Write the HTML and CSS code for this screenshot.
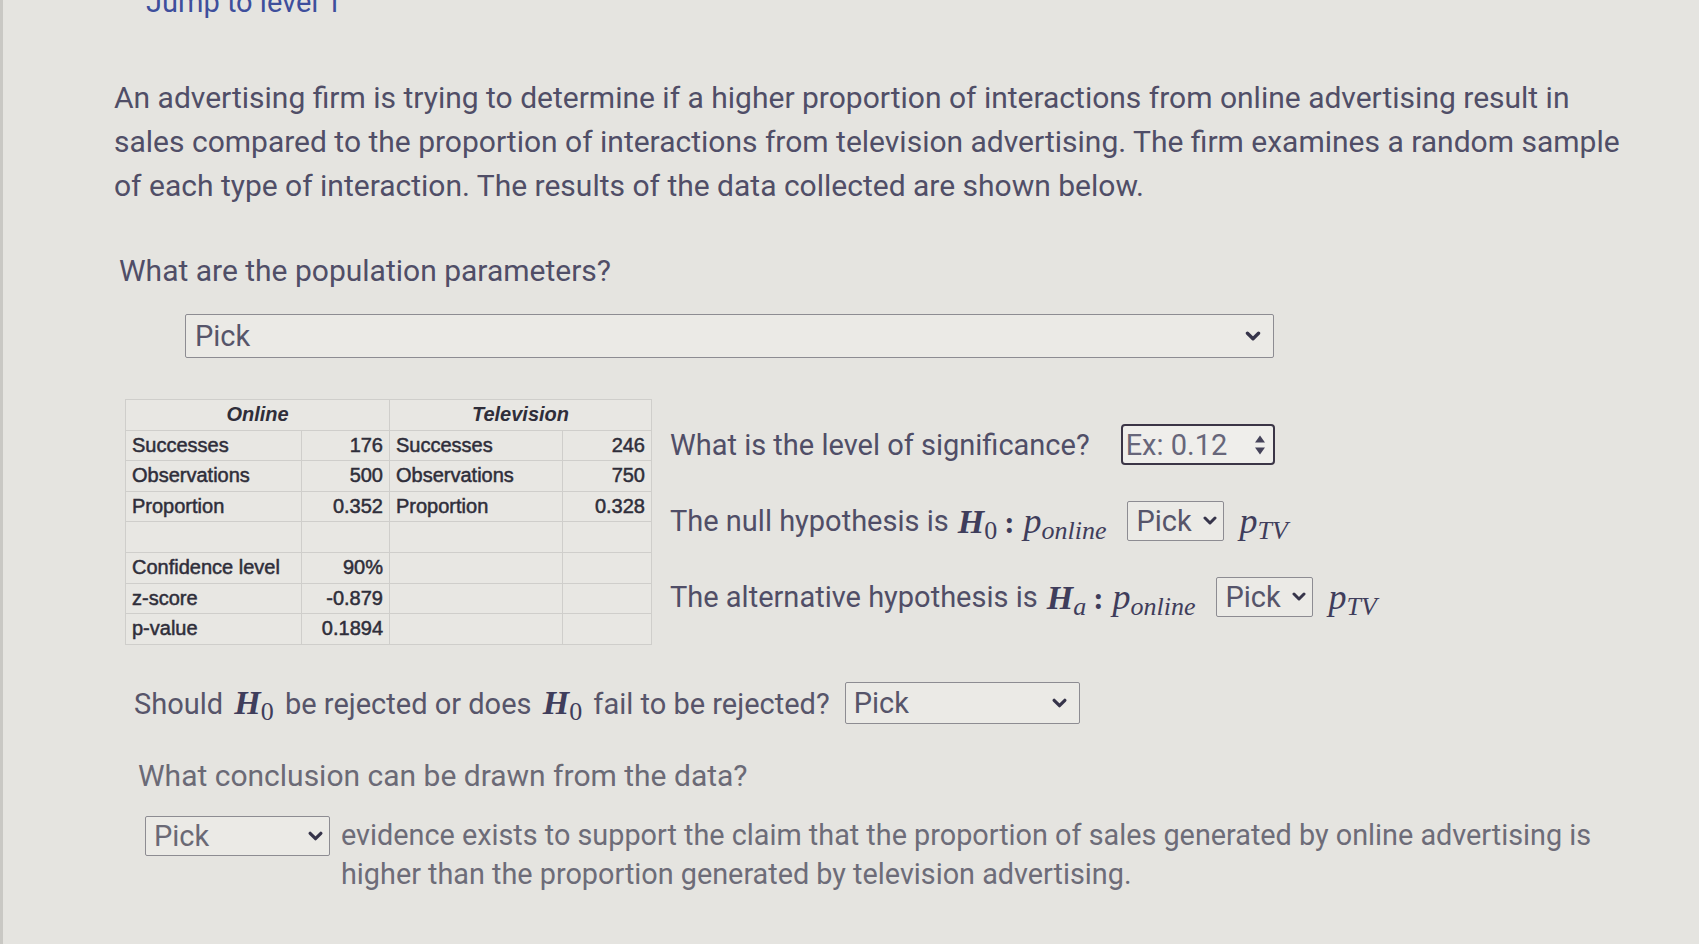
FILE: index.html
```html
<!DOCTYPE html>
<html lang="en">
  <head>
    <meta charset="UTF-8" />
    <title>Hypothesis test: online vs television advertising</title>
    <link rel="stylesheet" href="styles.css">
  </head>
  <body>
    <div class="page">
      <a class="jump">Jump to level 1</a>

      <p class="intro">
        An advertising firm is trying to determine if a higher proportion of interactions from online advertising result in
        sales compared to the proportion of interactions from television advertising. The firm examines a random sample
        of each type of interaction. The results of the data collected are shown below.
      </p>

      <p class="question params-q">What are the population parameters?</p>

      <!-- Population parameters dropdown -->
      <div class="select select-wide">
        <span>Pick</span>
        <svg class="chev" viewBox="0 0 14 9" width="16" height="10"><path d="M2 2 L7 7 L12 2" /></svg>
      </div>

      <div class="data-row">
        <table class="data">
          <tr class="head">
            <td colspan="2">Online</td>
            <td colspan="2">Television</td>
          </tr>
          <tr><td>Successes</td><td class="num">176</td><td>Successes</td><td class="num">246</td></tr>
          <tr><td>Observations</td><td class="num">500</td><td>Observations</td><td class="num">750</td></tr>
          <tr><td>Proportion</td><td class="num">0.352</td><td>Proportion</td><td class="num">0.328</td></tr>
          <tr><td></td><td></td><td></td><td></td></tr>
          <tr><td>Confidence level</td><td class="num">90%</td><td></td><td></td></tr>
          <tr><td>z-score</td><td class="num">-0.879</td><td></td><td></td></tr>
          <tr><td>p-value</td><td class="num">0.1894</td><td></td><td></td></tr>
        </table>

        <div class="side">
          <div class="line">
            <span>What is the level of significance?</span>
            <div class="num-input">
              <span>Ex: 0.12</span>
              <svg class="spin" viewBox="0 0 12 22" width="12" height="22">
                <path d="M6 1.5 L11 8.5 L1 8.5 Z" />
                <path d="M1 13.5 L11 13.5 L6 20.5 Z" />
              </svg>
            </div>
          </div>

          <div class="line">
            <span>The null hypothesis is</span>
            <span class="math"><i class="big">H</i><sub class="zero">0</sub><span class="colon">:</span><i class="p">p</i><sub><i>online</i></sub></span>
            <div class="select select-sm">
              <span>Pick</span>
              <svg class="chev" viewBox="0 0 14 9" width="14" height="9"><path d="M2 2 L7 7 L12 2" /></svg>
            </div>
            <span class="math tv"><i class="p">p</i><sub><i>TV</i></sub></span>
          </div>

          <div class="line">
            <span>The alternative hypothesis is</span>
            <span class="math"><i class="big">H</i><sub><i>a</i></sub><span class="colon">:</span><i class="p">p</i><sub><i>online</i></sub></span>
            <div class="select select-sm">
              <span>Pick</span>
              <svg class="chev" viewBox="0 0 14 9" width="14" height="9"><path d="M2 2 L7 7 L12 2" /></svg>
            </div>
            <span class="math tv"><i class="p">p</i><sub><i>TV</i></sub></span>
          </div>
        </div>
      </div>

      <div class="line reject">
        <span>Should <span class="math"><i class="big">H</i><sub class="zero">0</sub></span> be rejected or does <span class="math"><i class="big">H</i><sub class="zero">0</sub></span> fail to be rejected?</span>
        <div class="select select-md">
          <span>Pick</span>
          <svg class="chev" viewBox="0 0 14 9" width="15" height="10"><path d="M2 2 L7 7 L12 2" /></svg>
        </div>
      </div>

      <p class="question conclusion-q">What conclusion can be drawn from the data?</p>

      <div class="conclusion">
        <div class="select select-cl">
          <span>Pick</span>
          <svg class="chev" viewBox="0 0 14 9" width="15" height="10"><path d="M2 2 L7 7 L12 2" /></svg>
        </div>
        <p>evidence exists to support the claim that the proportion of sales generated by online advertising is higher than the proportion generated by television advertising.</p>
      </div>
    </div>
  </body>
</html>
```

FILE: styles.css
```css
body {
  margin: 0;
  height: 944px;
  overflow: hidden;
  background: #e5e4e0;
  border-left: 3px solid #c9c8c4;
  font-family: Roboto, "Noto Sans", sans-serif;
  color: #504e67;
}
.page {
  padding: 0 70px 0 111px;
}
.jump {
  display: block;
  margin: -20px 0 0 32px;
  font-size: 29px;
  line-height: 44px;
  color: #3e4f9c;
}
.intro {
  margin: 52px 0 0;
  font-size: 30px;
  line-height: 44px;
}
.question {
  margin: 0;
  font-size: 30px;
  line-height: 44px;
}
.params-q {
  margin: 41px 0 0 5px;
}

/* dropdowns */
.select {
  display: flex;
  align-items: center;
  justify-content: space-between;
  box-sizing: border-box;
  border: 1px solid #8d8c92;
  border-radius: 2px;
  background: #ebeae6;
  color: #56556a;
  font-size: 29px;
}
.chev {
  fill: none;
  stroke: #36344a;
  stroke-width: 3;
  stroke-linecap: round;
  stroke-linejoin: round;
}
.select-wide {
  margin: 21px 0 0 71px;
  width: 1089px;
  height: 44px;
  padding: 0 12px 0 9px;
}
.select-sm {
  width: 97px;
  height: 40px;
  padding: 0 6px 0 8px;
  margin: 0 15px 0 21px;
}
.select-md {
  width: 235px;
  height: 42px;
  padding: 0 12px 0 8px;
  margin-left: 15px;
}
.select-cl {
  flex: none;
  width: 185px;
  height: 40px;
  padding: 0 6px 0 8px;
  color: #6a6975;
}

/* data table + side questions */
.data-row {
  display: flex;
  gap: 18px;
  margin: 41px 0 0 11px;
}
.data {
  border-collapse: collapse;
  font-family: "Liberation Sans", Arial, sans-serif;
  font-size: 20px;
  color: #2f2e3a;
  -webkit-text-stroke: 0.5px #2f2e3a;
  background: #e8e7e3;
}
.data td {
  border: 1px solid #cfcecb;
  height: 29.6px;
  padding: 0 6px;
  white-space: nowrap;
}
.data td:nth-child(1) { width: 163px; }
.data td:nth-child(2) { width: 75px; }
.data td:nth-child(3) { width: 160px; }
.data td:nth-child(4) { width: 76px; }
.data .head td {
  text-align: center;
  font-style: italic;
  font-weight: bold;
  -webkit-text-stroke: 0;
  width: auto;
}
.data .num {
  text-align: right;
}
.side {
  padding-top: 25px;
  display: flex;
  flex-direction: column;
  gap: 35px;
}
.line {
  display: flex;
  align-items: center;
  height: 41px;
  font-size: 29px;
  white-space: nowrap;
}
.num-input {
  display: flex;
  align-items: center;
  justify-content: space-between;
  box-sizing: border-box;
  width: 154px;
  height: 41px;
  margin-left: 31px;
  padding: 0 7px 0 3px;
  border: 2px solid #3b3546;
  border-radius: 4px;
  background: #efeeeb;
  color: #67667a;
}
.spin {
  fill: #45435a;
}

/* math */
.math {
  font-family: "Liberation Serif", "DejaVu Serif", serif;
  color: #3f3d5b;
  font-size: 31px;
  margin-left: 9px;
}
.math i {
  font-style: italic;
}
.math .big {
  font-size: 34px;
  font-weight: bold;
}
.math .p {
  font-size: 36px;
}
.math sub {
  font-size: 26px;
  vertical-align: -6px;
  line-height: 0;
}
.math .zero {
  font-style: normal;
}
.math .colon {
  margin: 0 9px 0 7px;
  font-style: normal;
  font-weight: bold;
}
.math.tv {
  margin-left: 0;
}

/* bottom questions */
.reject {
  margin: 37px 0 0 20px;
  height: 42px;
  color: #57556a;
}
.reject .math {
  margin: 0 4px;
}
.conclusion-q {
  margin: 30px 0 0 24px;
  color: #6b6a76;
}
.conclusion {
  display: flex;
  align-items: flex-start;
  gap: 11px;
  margin: 18px 0 0 31px;
}
.conclusion p {
  margin: 0;
  font-size: 28.8px;
  line-height: 39px;
  color: #6d6c78;
}
```
